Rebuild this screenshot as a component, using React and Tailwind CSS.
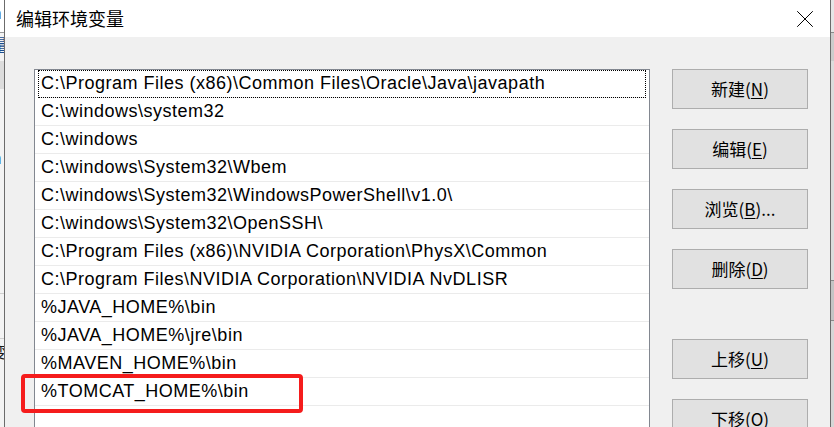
import { X } from "lucide-react";

const paths = [
  "C:\\Program Files (x86)\\Common Files\\Oracle\\Java\\javapath",
  "C:\\windows\\system32",
  "C:\\windows",
  "C:\\windows\\System32\\Wbem",
  "C:\\windows\\System32\\WindowsPowerShell\\v1.0\\",
  "C:\\windows\\System32\\OpenSSH\\",
  "C:\\Program Files (x86)\\NVIDIA Corporation\\PhysX\\Common",
  "C:\\Program Files\\NVIDIA Corporation\\NVIDIA NvDLISR",
  "%JAVA_HOME%\\bin",
  "%JAVA_HOME%\\jre\\bin",
  "%MAVEN_HOME%\\bin",
  "%TOMCAT_HOME%\\bin",
  "",
];

const font = { fontFamily: '"Liberation Sans", "Noto Sans CJK SC", sans-serif' };
const cjk = { fontFamily: '"Noto Sans CJK SC", sans-serif' };

function Btn({ label, mn, tail = "" }) {
  return (
    <button
      className="w-[136px] h-[40px] shrink-0 bg-[#e1e1e1] border border-[#adadad] text-[17px] text-black flex items-center justify-center"
      style={cjk}
    >
      {label}(<span className="underline underline-offset-2">{mn}</span>){tail}
    </button>
  );
}

export default function App() {
  return (
    <div
      className="w-[834px] h-[427px] flex overflow-hidden bg-[#f0f0f0]"
      style={font}
    >
      {/* window behind, left */}
      <div className="w-[5px] shrink-0 flex flex-col overflow-hidden border-r border-[#6b6b6b] bg-[#f3f3f3] text-[17px] leading-[28px] text-[#1a1a1a]">
        <div className="h-[33px] shrink-0 bg-white border-b border-[#9a9a9a] -ml-[8px]">n</div>
        <div className="-ml-[9px] text-[#1a4d8f]">量</div>
        <div className="-ml-[9px] bg-[#dcdcdc] text-[#1a4d8f]">v</div>
        <div className="-ml-[9px] text-[#1a4d8f]">v</div>
        <div className="-ml-[5px]">t</div>
        <div className="-ml-[8px] text-[#1a4d8f]">n</div>
        <div className="-ml-[6px] text-[#1a4d8f]">i</div>
        <div className="-ml-[4px]">l</div>
        <div className="-ml-[6px] text-[#1a4d8f]">/</div>
        <div className="h-[37px] shrink-0 border-b border-[#cfcfcf]" />
        <div className="h-[45px] shrink-0 border-b border-[#cfcfcf]" />
        <div className="-ml-[9px] text-[16px]">变</div>
      </div>

      {/* dialog */}
      <div className="w-[825px] shrink-0 flex flex-col overflow-hidden">
        <div className="h-[37px] shrink-0 bg-white flex items-center justify-between pl-[11px] pr-[10px]">
          <span className="text-[18px] text-black" style={cjk}>
            编辑环境变量
          </span>
          <X size={30} strokeWidth={0.8} className="text-black" />
        </div>

        <div className="flex-1 flex items-start pt-[32px] pl-[29px] overflow-hidden">
          <div className="relative w-[616px] h-[380px] shrink-0 bg-white border border-[#828790] text-[18px] tracking-[0.5px] text-black">
            {paths.map((p, i) => (
              <div
                key={i}
                className={
                  i === 0
                    ? "h-[28px] flex items-center pl-[3px] mx-[3px] border-b border-[#ebebeb] outline outline-1 outline-dotted outline-black -outline-offset-1"
                    : "h-[28px] flex items-center pl-[6px] border-b border-[#ebebeb]"
                }
              >
                {p}
              </div>
            ))}
            <div className="absolute left-[-14px] top-[304px] w-[282px] h-[39px] border-[4px] border-[#f51c1c] rounded-[4px]" />
          </div>

          <div className="ml-[22px] flex flex-col gap-[20px]">
            <Btn label="新建" mn="N" />
            <Btn label="编辑" mn="E" />
            <Btn label="浏览" mn="B" tail="..." />
            <Btn label="删除" mn="D" />
            <div className="h-[10px] shrink-0" />
            <Btn label="上移" mn="U" />
            <Btn label="下移" mn="O" />
          </div>
        </div>
      </div>

      {/* window behind, right */}
      <div className="w-[4px] shrink-0 border-l border-[#6b6b6b] bg-[#d6d6d6] flex flex-col">
        <div className="h-[33px] shrink-0 bg-[#e6e6e6] border-b border-[#8a8a8a]" />
        <div className="h-[28px] shrink-0 bg-[#cccccc]" />
        <div className="h-[220px] shrink-0 bg-[#dcdcdc] border-b border-[#8a8a8a]" />
        <div className="h-[40px] shrink-0 bg-[#c4c4c4] border-b border-[#8a8a8a]" />
      </div>
    </div>
  );
}
